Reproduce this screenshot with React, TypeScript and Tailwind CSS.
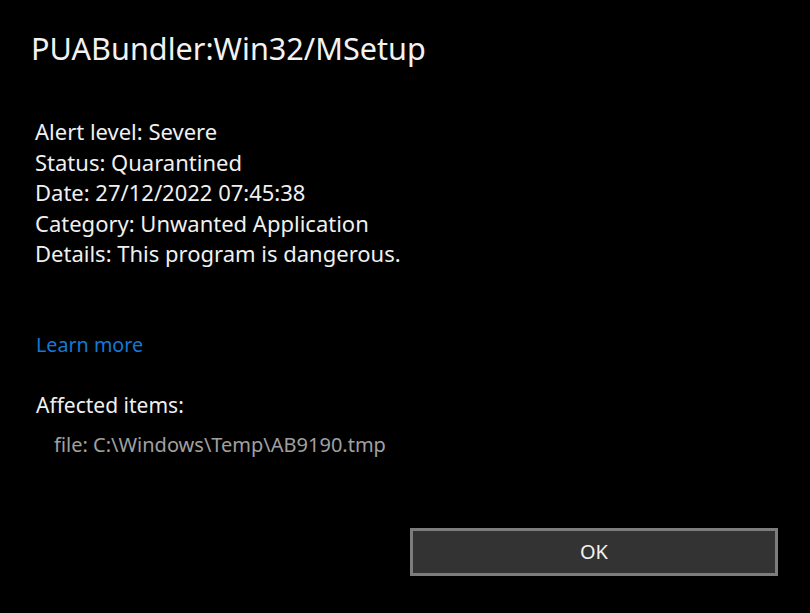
export default function App() {
  const rows = [
    "Alert level: Severe",
    "Status: Quarantined",
    "Date: 27/12/2022 07:45:38",
    "Category: Unwanted Application",
    "Details: This program is dangerous.",
  ];

  return (
    <div
      className="w-[810px] h-[613px] bg-black text-white flex flex-col overflow-hidden"
      style={{ fontFamily: '"Noto Sans", "Open Sans", sans-serif' }}
    >
      <h1 className="ml-[31px] mt-[28px] text-[30.6px] leading-[40px] text-[#f2f2f2] font-normal">
        PUABundler:Win32/MSetup
      </h1>

      {/* threat details */}
      <div className="ml-[35px] mt-[48px] flex flex-col text-[22px] leading-[30.5px] text-[#f0f0f0]">
        {rows.map((r) => (
          <div key={r} className="whitespace-pre">
            {r}
          </div>
        ))}
      </div>

      <a className="ml-[36px] mt-[61px] text-[19.7px] leading-[30px] text-[#1479d5]">
        Learn more
      </a>

      <div className="ml-[36px] mt-[30px] text-[21px] leading-[30px] text-[#f0f0f0]">
        Affected items:
      </div>
      <div className="ml-[54px] mt-[10px] text-[20px] leading-[30px] text-[#a0a0a0]">
        file: C:\Windows\Temp\AB9190.tmp
      </div>

      <div className="flex-1" />

      <div className="flex justify-end pr-[32px] pb-[37px]">
        <button className="w-[368px] h-[48px] bg-[#333333] border-[3px] border-[#7d7d7d] text-[20px] text-[#f2f2f2]">
          OK
        </button>
      </div>
    </div>
  );
}
